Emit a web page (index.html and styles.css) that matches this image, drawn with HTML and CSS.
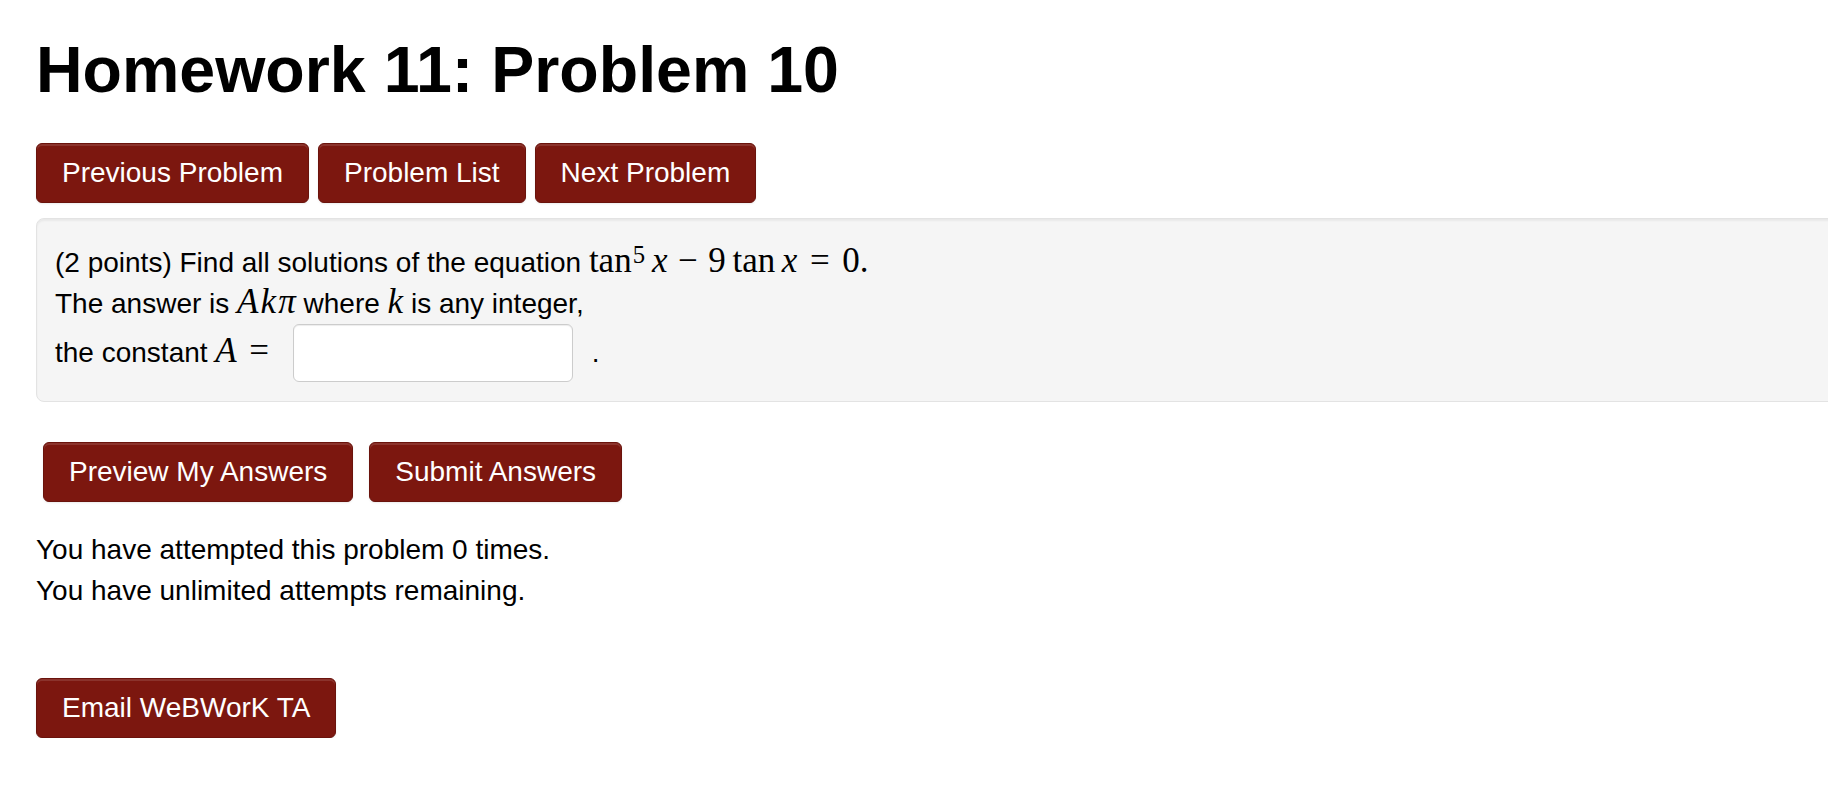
FILE: index.html
```html
<!DOCTYPE html>
<html lang="en">
<head>
<meta charset="utf-8">
<title>Homework 11: Problem 10</title>
<link rel="stylesheet" href="styles.css">
</head>
<body>
<div class="page">
  <h1 class="title">Homework 11: Problem 10</h1>

  <div class="nav">
    <a class="btn" href="#">Previous Problem</a>
    <a class="btn" href="#">Problem List</a>
    <a class="btn" href="#">Next Problem</a>
  </div>

  <div class="well">
    <div class="line">(2 points) Find all solutions of the equation <span class="m">tan<span class="sup">5</span><i class="mi sp-th">x</i><span class="op">−</span>9<span class="fn">tan</span><i class="mi">x</i><span class="rel">=</span>0.</span></div>
    <div class="line second">The answer is <span class="m"><i class="mi">A</i><i class="mi gap">k</i><i class="mi gap">π</i></span> where <span class="m"><i class="mi">k</i></span> is any integer,</div>
    <div class="line answer-row">
      <span class="label">the constant <span class="m"><i class="mi">A</i><span class="rel">=</span></span></span>
      <input class="answer" type="text" aria-label="answer">
      <span class="dot">.</span>
    </div>
  </div>

  <div class="actions">
    <button class="btn" type="button">Preview My Answers</button>
    <button class="btn" type="button">Submit Answers</button>
  </div>

  <div class="attempts">
    <div>You have attempted this problem 0 times.</div>
    <div>You have unlimited attempts remaining.</div>
  </div>

  <div class="email">
    <button class="btn" type="button">Email WeBWorK TA</button>
  </div>
</div>
</body>
</html>
```

FILE: styles.css
```css
html, body {
  margin: 0;
  padding: 0;
  background: #fff;
  overflow: hidden;
}

body {
  font-family: "Liberation Sans", Arial, sans-serif;
  font-size: 28px;
  line-height: 40px;
  color: #000;
}

.page {
  padding-left: 36px;
}

.title {
  margin: 0;
  padding-top: 34px;
  font-size: 64.5px;
  line-height: 72px;
  font-weight: bold;
  color: #000;
}

.nav {
  display: flex;
  gap: 9px;
  margin-top: 37px;
}

.btn {
  display: inline-block;
  box-sizing: border-box;
  height: 60px;
  padding: 9px 25px;
  font-family: "Liberation Sans", Arial, sans-serif;
  font-size: 28px;
  line-height: 40px;
  color: #fff;
  text-decoration: none;
  background: #7c170f;
  border: 1px solid #6a130c;
  border-radius: 6px;
  box-shadow: inset 0 2px 0 rgba(255, 255, 255, 0.12), 0 1px 2px rgba(0, 0, 0, 0.08);
  cursor: pointer;
  white-space: nowrap;
}

.well {
  box-sizing: border-box;
  width: 1900px;
  margin-top: 15px;
  padding: 24px 18px 19px;
  background: #f5f5f5;
  border: 1px solid #e3e3e3;
  border-radius: 8px;
  box-shadow: inset 0 2px 2px rgba(0, 0, 0, 0.05);
}

.line {
  height: 40px;
  white-space: nowrap;
}

.second {
  margin-top: 1px;
}

.m {
  font-family: "Liberation Serif", "Times New Roman", serif;
  font-size: 35px;
  line-height: 1;
}

.mi {
  font-style: italic;
}

.gap {
  margin-left: 0.06em;
}

.sup {
  display: inline-block;
  font-size: 0.707em;
  vertical-align: 0.36em;
  margin-left: 1px;
}

.sp-th {
  margin-left: 0.2em;
}

.op {
  margin: 0 0.3em;
}

.fn {
  margin: 0 0.19em;
}

.rel {
  margin: 0 0.36em;
}

.answer-row {
  display: flex;
  align-items: center;
  height: 58px;
}

.label {
  white-space: pre;
}

.answer {
  box-sizing: border-box;
  width: 280px;
  height: 58px;
  margin-left: 11px;
  padding: 8px 12px;
  font-family: "Liberation Sans", Arial, sans-serif;
  font-size: 28px;
  background: #fff;
  border: 1px solid #cccccc;
  border-radius: 6px;
  box-shadow: inset 0 1px 1px rgba(0, 0, 0, 0.075);
  outline: none;
}

.dot {
  margin-left: 19px;
}

.actions {
  display: flex;
  gap: 16px;
  margin-top: 40px;
  padding-left: 7px;
}

.attempts {
  margin-top: 27px;
  line-height: 41px;
}

.email {
  margin-top: 67px;
}
```
